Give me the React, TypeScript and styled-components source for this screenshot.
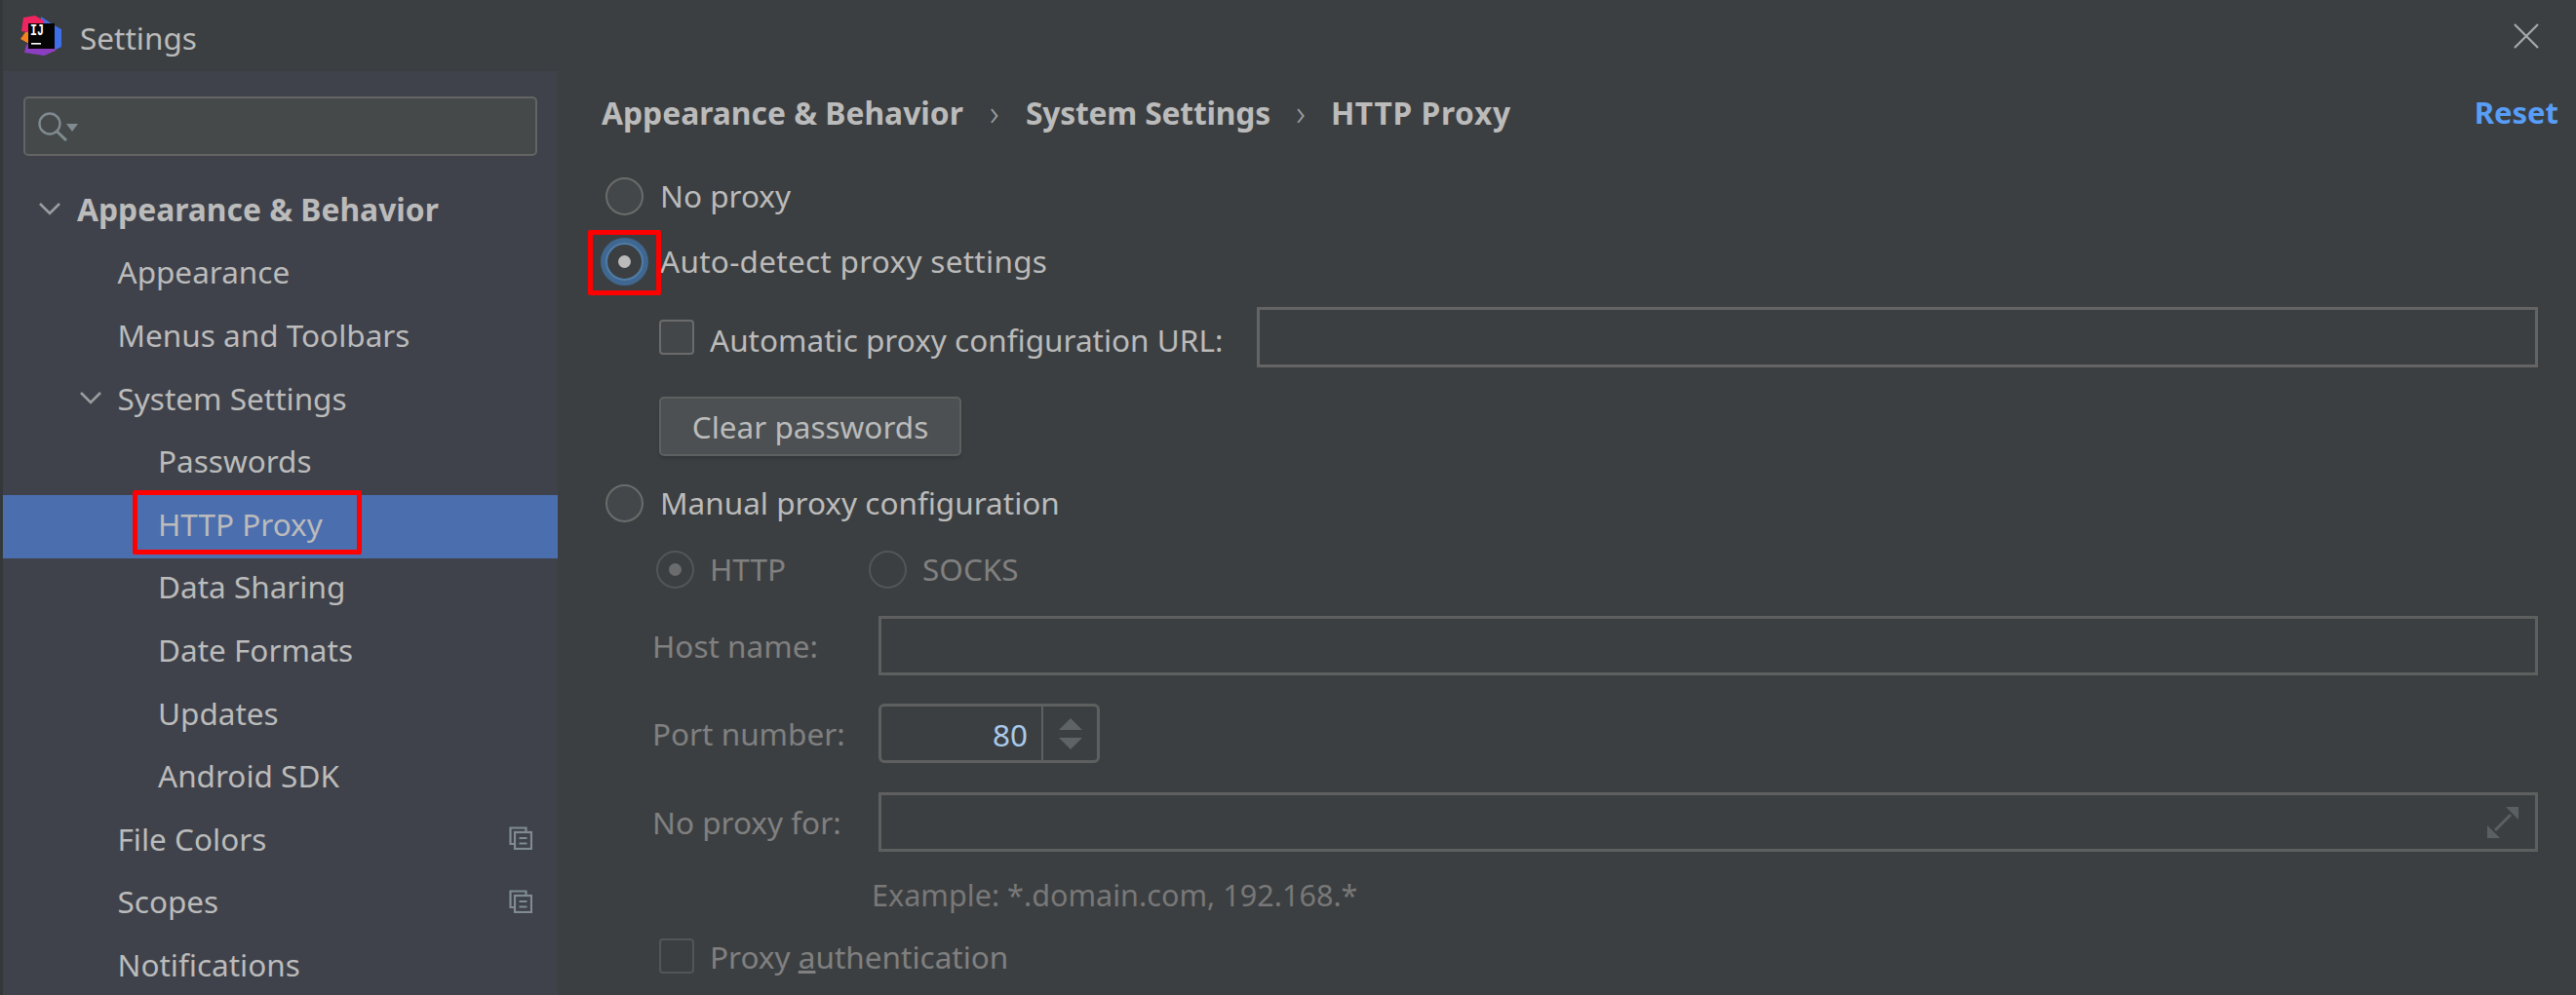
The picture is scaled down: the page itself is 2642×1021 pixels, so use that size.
import styled, { createGlobalStyle } from "styled-components";

const GlobalStyle = createGlobalStyle`
  html, body {
    margin: 0;
    padding: 0;
    background: #3c3f41;
  }
  body {
    width: 2642px;
    height: 1021px;
    overflow: hidden;
    font-family: "Noto Sans", "Open Sans", sans-serif;
    font-size: 31.5px;
    color: #bbbbbb;
  }
  * {
    box-sizing: border-box;
  }
`;

const tree = [
  { label: "Appearance & Behavior", depth: 0, open: true, bold: true },
  { label: "Appearance", depth: 1 },
  { label: "Menus and Toolbars", depth: 1 },
  { label: "System Settings", depth: 1, open: true },
  { label: "Passwords", depth: 2 },
  { label: "HTTP Proxy", depth: 2, selected: true },
  { label: "Data Sharing", depth: 2 },
  { label: "Date Formats", depth: 2 },
  { label: "Updates", depth: 2 },
  { label: "Android SDK", depth: 2 },
  { label: "File Colors", depth: 1, copy: true },
  { label: "Scopes", depth: 1, copy: true },
  { label: "Notifications", depth: 1 },
];

function Logo() {
  return (
    <LogoSvg viewBox="0 0 42 42">
      <polygon points="21,1 33,9 42,14 42,32 24,41 14,36 20,14" fill="#3f6fe8" />
      <polygon points="24,41 36,36 33,18 6,30 4,38" fill="#8b3fc0" />
      <polygon points="3,2 15,0 25,6 14,18 1,16" fill="#f0245f" />
      <polygon points="5,17 9,17 9,29 0,24" fill="#f58220" />
      <rect x="8" y="8" width="27" height="26" fill="#050505" />
      <text
        x="10"
        y="20"
        fontFamily="Liberation Mono"
        fontWeight="700"
        fontSize="16"
        textLength="14"
        lengthAdjust="spacingAndGlyphs"
        fill="#ffffff"
      >
        IJ
      </text>
      <rect x="11" y="28" width="10" height="1.6" fill="#ffffff" />
    </LogoSvg>
  );
}

function Chevron() {
  return (
    <ChevronSvg viewBox="0 0 24 16">
      <path d="M2 3 L12 13 L22 3" fill="none" stroke="#9a9da0" strokeWidth="2.6" />
    </ChevronSvg>
  );
}

function SearchIcon() {
  return (
    <SearchSvg viewBox="0 0 42 30">
      <circle cx="12" cy="12" r="10.5" fill="none" stroke="#7f8b91" strokeWidth="2.4" />
      <path d="M19.5 20 L29 29" stroke="#7f8b91" strokeWidth="3" />
      <polygon points="29,12 41,12 35,20" fill="#7f8b91" />
    </SearchSvg>
  );
}

function CopyIcon() {
  return (
    <CopySvg viewBox="0 0 24 24">
      <path d="M5.5 18 H1.5 V1.5 H17.5 V5.5" fill="none" stroke="#7f8b91" strokeWidth="2.2" />
      <rect x="6" y="6" width="17" height="17" fill="none" stroke="#7f8b91" strokeWidth="2.2" />
      <path d="M10.5 12 H18.5 M10.5 17.5 H18.5" stroke="#7f8b91" strokeWidth="2.2" />
    </CopySvg>
  );
}

function ExpandIcon() {
  return (
    <ExpandSvg viewBox="0 0 32 32">
      <polygon points="19,0 32,0 32,13" fill="#5a6062" />
      <polygon points="0,19 0,32 13,32" fill="#5a6062" />
      <path d="M24 8 L8 24" stroke="#5a6062" strokeWidth="3" />
    </ExpandSvg>
  );
}

export default function App() {
  return (
    <Window>
      <GlobalStyle />
      <TitleBar>
        <Logo />
        <Title>Settings</Title>
        <CloseSvg viewBox="0 0 26 26">
          <path d="M1 1 L25 25 M25 1 L1 25" stroke="#a7a9ab" strokeWidth="2.2" />
        </CloseSvg>
      </TitleBar>

      <Body>
        <Sidebar>
          <SearchBox>
            <SearchIcon />
          </SearchBox>
          <Tree>
            {tree.map((item) => (
              <TreeRow key={item.label} $depth={item.depth} $selected={item.selected} $bold={item.bold}>
                {item.open && <Chevron />}
                <span>{item.label}</span>
                {item.selected && <RowMarker />}
                {item.copy && <CopyIcon />}
              </TreeRow>
            ))}
          </Tree>
        </Sidebar>

        <Main>
          <Breadcrumbs>
            <Crumb>Appearance &amp; Behavior</Crumb>
            <CrumbSep $width={64}>›</CrumbSep>
            <Crumb $track={-0.2}>System Settings</Crumb>
            <CrumbSep $width={62}>›</CrumbSep>
            <Crumb $track={0.6}>HTTP Proxy</Crumb>
            <ResetLink>Reset</ResetLink>
          </Breadcrumbs>

          <Form>
            <OptionRow>
              <Radio />
              <Label>No proxy</Label>
            </OptionRow>
            <OptionRow $top={28}>
              <Radio $checked $focused>
                <RadioMarker />
              </Radio>
              <Label $track={0.28}>Auto-detect proxy settings</Label>
            </OptionRow>
            <CheckRow $top={27}>
              <CheckBox />
              <RowText>Automatic proxy configuration URL:</RowText>
              <UrlInput />
            </CheckRow>
            <ClearButton>Clear passwords</ClearButton>
            <OptionRow>
              <Radio />
              <Label>Manual proxy configuration</Label>
            </OptionRow>
            <ProtocolRow>
              <Protocol>
                <Radio $checked $disabled />
                <ProtocolName>HTTP</ProtocolName>
              </Protocol>
              <Protocol>
                <Radio $disabled />
                <ProtocolName>SOCKS</ProtocolName>
              </Protocol>
            </ProtocolRow>
            <FieldRow>
              <FieldLabel>Host name:</FieldLabel>
              <TextField />
            </FieldRow>
            <FieldRow>
              <FieldLabel>Port number:</FieldLabel>
              <Spinner>
                <SpinnerValue>80</SpinnerValue>
                <SpinnerArrows>
                  <ArrowUp />
                  <ArrowDown />
                </SpinnerArrows>
              </Spinner>
            </FieldRow>
            <FieldRow $top={30}>
              <FieldLabel>No proxy for:</FieldLabel>
              <TextField>
                <ExpandIcon />
              </TextField>
            </FieldRow>
            <HintText>Example: *.domain.com, 192.168.*</HintText>
            <DisabledCheckRow>
              <CheckBox $disabled />
              <span>
                Proxy <u>a</u>uthentication
              </span>
            </DisabledCheckRow>
          </Form>
        </Main>
      </Body>
    </Window>
  );
}

const Window = styled.div`
  width: 2642px;
  height: 1021px;
  overflow: hidden;
  display: flex;
  flex-direction: column;
  background: #3c3f41;
  border-left: 3px solid #35383a;
`;

const TitleBar = styled.header`
  height: 73px;
  flex: none;
  display: flex;
  align-items: center;
  padding: 0 38px 0 18px;
`;

const LogoSvg = styled.svg`
  width: 42px;
  height: 42px;
  margin-top: 1px;
`;

const Title = styled.div`
  margin-left: 19px;
  padding-top: 3px;
  flex: 1;
  line-height: 73px;
`;

const CloseSvg = styled.svg`
  width: 26px;
  height: 26px;
`;

const Body = styled.div`
  flex: 1;
  min-height: 0;
  display: flex;
`;

const Sidebar = styled.aside`
  width: 569px;
  flex: none;
  background: #3f424a;
  padding-top: 26px;
  overflow: hidden;
`;

const SearchBox = styled.div`
  width: 527px;
  height: 61px;
  margin-left: 21px;
  display: flex;
  align-items: center;
  padding: 1px 0 0 13px;
  background: #45494a;
  border: 2px solid #646464;
  border-radius: 5px;
`;

const SearchSvg = styled.svg`
  width: 42px;
  height: 30px;
`;

const Tree = styled.div`
  margin-top: 25px;
`;

const TreeRow = styled.div<{ $depth: number; $selected?: boolean; $bold?: boolean }>`
  position: relative;
  height: 64.6px;
  display: flex;
  align-items: center;
  padding: 0 26px 6px ${({ $depth }) => 76 + $depth * 41.5}px;
  font-weight: ${({ $bold }) => ($bold ? 700 : 400)};
  font-size: ${({ $bold }) => ($bold ? 31.8 : 31.5)}px;
  background: ${({ $selected }) => ($selected ? "#4b6eaf" : "transparent")};

  > span {
    flex: 1;
    white-space: nowrap;
  }
`;

const ChevronSvg = styled.svg`
  width: 24px;
  height: 16px;
  flex: none;
  margin-left: -40px;
  margin-right: 16px;
`;

const CopySvg = styled.svg`
  width: 24px;
  height: 24px;
  flex: none;
`;

const RowMarker = styled.div`
  position: absolute;
  left: 133px;
  top: -5px;
  width: 235px;
  height: 66px;
  border: 5px solid #ff0000;
  border-radius: 2px;
`;

const Main = styled.main`
  flex: 1;
  min-width: 0;
  padding: 14px 18px 0 45px;
  display: flex;
  flex-direction: column;
`;

const Breadcrumbs = styled.div`
  height: 60px;
  flex: none;
  display: flex;
  align-items: center;
  padding-bottom: 4px;
  font-size: 31.8px;
  font-weight: 700;
  white-space: nowrap;
`;

const Crumb = styled.span<{ $track?: number }>`
  letter-spacing: ${({ $track }) => $track ?? 0}px;
`;

const CrumbSep = styled.span<{ $width: number }>`
  width: ${({ $width }) => $width}px;
  text-align: center;
  font-size: 36px;
  font-weight: 300;
  color: #9a9da0;
`;

const ResetLink = styled.span`
  margin-left: auto;
  font-size: 31px;
  color: #589df6;
`;

const Form = styled.div`
  margin-top: 35px;
  padding: 0 21px 0 4px;
  display: flex;
  flex-direction: column;
`;

const OptionRow = styled.div<{ $top?: number }>`
  height: 39px;
  margin-top: ${({ $top }) => $top ?? 29}px;
  display: flex;
  align-items: center;
  gap: 17px;
  white-space: nowrap;

  &:first-child {
    margin-top: 0;
  }
`;

const Label = styled.span<{ $track?: number }>`
  letter-spacing: ${({ $track }) => $track ?? 0}px;
  margin-bottom: 3px;
`;

const Radio = styled.div<{ $checked?: boolean; $focused?: boolean; $disabled?: boolean }>`
  position: relative;
  width: 39px;
  height: 39px;
  flex: none;
  display: flex;
  align-items: center;
  justify-content: center;
  border-radius: 50%;
  background: ${({ $disabled }) => ($disabled ? "transparent" : "#43474a")};
  border: 2px solid ${({ $disabled }) => ($disabled ? "#535658" : "#6b6b6b")};
  box-shadow: ${({ $focused }) => ($focused ? "0 0 0 5px #3f678f" : "none")};

  ${({ $focused }) => $focused && "border-color: #4f7da8; background: #3c3f41;"}

  &::after {
    content: "";
    display: ${({ $checked }) => ($checked ? "block" : "none")};
    width: 13px;
    height: 13px;
    border-radius: 50%;
    background: ${({ $disabled }) => ($disabled ? "#6a6c6e" : "#bbbbbb")};
  }
`;

const RadioMarker = styled.div`
  position: absolute;
  left: -20px;
  top: -15px;
  width: 75px;
  height: 67px;
  border: 5px solid #ff0000;
  border-radius: 2px;
`;

const CheckRow = styled.div<{ $top?: number }>`
  height: 62px;
  margin-top: ${({ $top }) => $top ?? 29}px;
  margin-left: 55px;
  display: flex;
  align-items: center;
  gap: 16px;
  white-space: nowrap;
`;

const RowText = styled.span`
  padding-top: 4px;
`;

const CheckBox = styled.div<{ $disabled?: boolean }>`
  width: 36px;
  height: 36px;
  flex: none;
  border-radius: 4px;
  background: ${({ $disabled }) => ($disabled ? "transparent" : "#43474a")};
  border: 2px solid ${({ $disabled }) => ($disabled ? "#535658" : "#6b6b6b")};
`;

const UrlInput = styled.div`
  flex: 1;
  height: 62px;
  margin-left: 19px;
  border: 3px solid #646464;
`;

const ClearButton = styled.button`
  width: 310px;
  height: 61px;
  margin: 30px 0 0 55px;
  padding: 0;
  font: inherit;
  color: #bbbbbb;
  background: #4c5052;
  border: 2px solid #5e6060;
  border-radius: 5px;
  box-shadow: 0 3px 3px rgba(0, 0, 0, 0.12);
`;

const ProtocolRow = styled.div`
  height: 38px;
  margin: 29px 0 0 52px;
  display: flex;
  gap: 85px;
  color: #808080;
  white-space: nowrap;
`;

const Protocol = styled.div`
  display: flex;
  align-items: center;
  gap: 16px;
`;

const ProtocolName = styled.span`
  margin-bottom: 2px;
`;

const FieldRow = styled.div<{ $top?: number }>`
  height: 61px;
  margin: ${({ $top }) => $top ?? 29}px 0 0 48px;
  display: flex;
  align-items: center;
  white-space: nowrap;
`;

const FieldLabel = styled.div`
  width: 232px;
  flex: none;
  color: #808080;
`;

const TextField = styled.div`
  position: relative;
  flex: 1;
  height: 61px;
  border: 3px solid #5e6060;

  svg {
    position: absolute;
    right: 17px;
    top: 12px;
  }
`;

const ExpandSvg = styled.svg`
  width: 32px;
  height: 32px;
`;

const Spinner = styled.div`
  width: 227px;
  height: 61px;
  display: flex;
  border: 3px solid #5e6060;
  border-radius: 6px;
`;

const SpinnerValue = styled.div`
  width: 166px;
  height: 100%;
  display: flex;
  align-items: center;
  justify-content: flex-end;
  padding: 2px 14px 0 0;
  color: #a9c9ea;
  border-right: 2px solid #5e6060;
`;

const SpinnerArrows = styled.div`
  flex: 1;
  display: flex;
  flex-direction: column;
  align-items: center;
  justify-content: center;
  gap: 8px;
`;

const ArrowUp = styled.div`
  width: 0;
  height: 0;
  border-left: 12px solid transparent;
  border-right: 12px solid transparent;
  border-bottom: 12px solid #5e6365;
`;

const ArrowDown = styled.div`
  width: 0;
  height: 0;
  border-left: 12px solid transparent;
  border-right: 12px solid transparent;
  border-top: 12px solid #5e6365;
`;

const HintText = styled.div`
  height: 40px;
  margin: 24px 0 0 273px;
  line-height: 40px;
  font-size: 30.6px;
  color: #787878;
  white-space: nowrap;
`;

const DisabledCheckRow = styled.div`
  height: 36px;
  margin: 25px 0 0 55px;
  display: flex;
  align-items: center;
  gap: 16px;
  color: #808080;
  white-space: nowrap;
`;
